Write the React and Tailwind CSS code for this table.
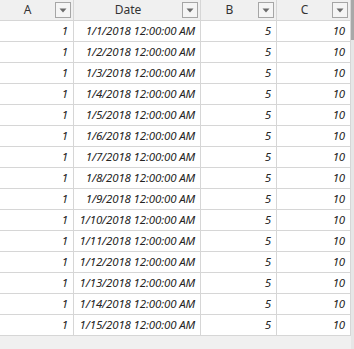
import React from 'react';

const columns = [
  { key: 'a', label: 'A', width: 'w-[74px]' },
  { key: 'date', label: 'Date', width: 'w-[127px]' },
  { key: 'b', label: 'B', width: 'w-[76px]' },
  { key: 'c', label: 'C', width: 'w-[74px]' },
];

const rows = Array.from({ length: 15 }, (_, i) => ({
  a: 1,
  date: `1/${i + 1}/2018 12:00:00 AM`,
  b: 5,
  c: 10,
}));

const FilterButton = () => (
  <div className="w-4 h-4 border border-[#a6a6a6] bg-[#f5f5f5] flex items-center justify-center shrink-0">
    <svg width="8" height="5" viewBox="0 0 8 5">
      <path d="M0.5 0.5 L7.5 0.5 L4 4.5 Z" fill="#6b6b6b" />
    </svg>
  </div>
);

export default function App() {
  return (
    <div
      className="w-[354px] h-[349px] bg-[#f0f0f0] flex overflow-hidden text-[12px] text-[#333]"
      style={{ fontFamily: '"Segoe UI", "Noto Sans", "Liberation Sans", sans-serif' }}
    >
      <div className="flex flex-col">
        {/* Header */}
        <div className="flex h-[21px] border-b border-[#d6d6d6] bg-[#f0f0f0]">
          {columns.map((col) => (
            <div key={col.key} className={`${col.width} flex items-center border-r border-[#d6d6d6] pr-[2px]`}>
              <span className="flex-1 text-center leading-none">{col.label}</span>
              <FilterButton />
            </div>
          ))}
        </div>
        {/* Rows */}
        {rows.map((row, i) => (
          <div key={i} className="flex h-[21px] border-b border-[#d6d6d6] bg-white">
            {columns.map((col) => (
              <div
                key={col.key}
                className={`${col.width} flex items-center justify-end border-r border-[#d6d6d6] pr-[5px] italic leading-none text-[#252423] text-[11.5px] whitespace-nowrap overflow-hidden tracking-[-0.15px]`}
              >
                {row[col.key]}
              </div>
            ))}
          </div>
        ))}
      </div>
      {/* Scrollbar */}
      <div className="flex-1 flex flex-col bg-[#e6e6e6]">
        <div className="h-[40px] bg-[#a8a8a8]" />
      </div>
    </div>
  );
}
